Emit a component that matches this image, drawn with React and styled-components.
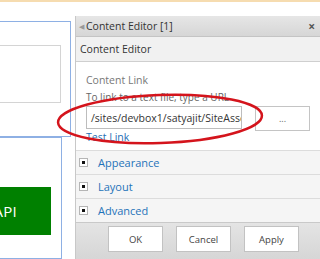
import React from 'react';
import styled, { createGlobalStyle } from 'styled-components';

const Global = createGlobalStyle`
  html, body { margin: 0; padding: 0; background: #fff; }
  body {
    width: 320px;
    height: 259px;
    overflow: hidden;
    font-family: "Open Sans", "Noto Sans", sans-serif;
  }
`;

const Page = styled.div`
  position: relative;
  width: 320px;
  height: 259px;
  display: flex;
  flex-direction: column;
  overflow: hidden;
`;

const TopStrip = styled.div`
  height: 2px;
  background: #f6dcb0;
  flex: none;
`;

const Body = styled.div`
  flex: 1;
  display: flex;
  min-height: 0;
`;

const LeftCol = styled.div`
  width: 75px;
  flex: none;
  padding-top: 19px;
  display: flex;
  flex-direction: column;
`;

const BlueBox = styled.div`
  width: ${p => p.w}px;
  height: ${p => p.h}px;
  border: 1px solid #8eb0e4;
  border-left: none;
  box-sizing: border-box;
  margin-bottom: ${p => p.gap || 0}px;
  padding-top: ${p => p.pad || 0}px;
`;

const GrayBox = styled.div`
  width: 61px;
  height: 58px;
  border: 1px solid #d4d4d4;
  border-left: none;
  box-sizing: border-box;
`;

const GreenButton = styled.div`
  width: 51px;
  height: 48px;
  background: #008000;
  color: #fff;
  font-size: 15px;
  display: flex;
  align-items: center;
  justify-content: flex-end;
  padding-right: 34px;
  box-sizing: border-box;
  letter-spacing: 0.3px;
`;

const Panel = styled.div`
  flex: 1;
  margin-top: 14px;
  border-left: 1px solid #c8c8c8;
  display: flex;
  flex-direction: column;
  background: #fff;
`;

const Header = styled.div`
  height: 21px;
  box-sizing: border-box;
  background: linear-gradient(#e6e6e6, #d6d6d6);
  border-bottom: 1px solid #c4c4c4;
  display: flex;
  align-items: center;
  padding: 0 5px 0 3px;
  font-size: 10.5px;
  color: #333;
`;

const Arrow = styled.span`
  font-size: 7px;
  color: #999;
  margin-right: 2px;
`;

const Close = styled.span`
  margin-left: auto;
  font-size: 12px;
  font-weight: bold;
  color: #555;
`;

const SubHeader = styled.div`
  height: 25px;
  box-sizing: border-box;
  background: #f1f1f1;
  border-bottom: 1px solid #cfcfcf;
  display: flex;
  align-items: center;
  padding-left: 4px;
  font-size: 10.5px;
  color: #333;
`;

const Content = styled.div`
  padding: 11px 0 0 10px;
  height: 88px;
  box-sizing: border-box;
  display: flex;
  flex-direction: column;
`;

const Label = styled.div`
  font-size: 10.5px;
  color: #777;
  line-height: 15px;
`;

const Hint = styled.div`
  font-size: 10px;
  color: #666;
  line-height: 13px;
  margin-top: 3px;
`;

const InputRow = styled.div`
  display: flex;
  gap: 13px;
  margin-top: 2px;
`;

const TextInput = styled.div`
  width: 156px;
  height: 23px;
  border: 1px solid #bdbdbd;
  box-sizing: border-box;
  font-size: 10.5px;
  color: #333;
  display: flex;
  align-items: center;
  padding-left: 4px;
  white-space: nowrap;
  overflow: hidden;
`;

const BrowseButton = styled.div`
  width: 55px;
  height: 25px;
  border: 1px solid #c4c4c4;
  box-sizing: border-box;
  font-size: 9px;
  color: #666;
  display: flex;
  align-items: center;
  justify-content: center;
`;

const LinkText = styled.div`
  font-size: 10.5px;
  color: #1f6fb5;
  line-height: 12px;
`;

const Section = styled.div`
  height: 24px;
  box-sizing: border-box;
  border-top: 1px solid #dcdcdc;
  background: #f5f5f5;
  display: flex;
  align-items: center;
  padding-left: 3px;
  font-size: 11px;
  color: #1f73b9;
`;

const Expander = styled.span`
  width: 9px;
  height: 9px;
  border: 1px solid #b5b5b5;
  background: #fff;
  box-sizing: border-box;
  margin-right: 10px;
  display: flex;
  align-items: center;
  justify-content: center;
  &::after {
    content: '';
    width: 3px;
    height: 3px;
    background: #111;
  }
`;

const Footer = styled.div`
  flex: 1;
  border-top: 1px solid #c9c9c9;
  background: linear-gradient(#e4e4e4, #d6d6d6);
  display: flex;
  align-items: flex-start;
  padding: 3px 0 0 32px;
  gap: 13px;
`;

const FooterButton = styled.div`
  width: 55px;
  height: 26px;
  box-sizing: border-box;
  border: 1px solid #c2c2c2;
  background: #fff;
  font-size: 9.5px;
  color: #444;
  display: flex;
  align-items: center;
  justify-content: center;
`;

const Annotation = styled.svg`
  position: absolute;
  left: 0;
  top: 0;
  pointer-events: none;
`;

export default function App() {
  return (
    <Page>
      <Global />
      <TopStrip />
      <Body>
        <LeftCol>
          <BlueBox w={71} h={126} pad={23}>
            <GrayBox />
          </BlueBox>
          <BlueBox w={62} h={130} pad={49}>
            <GreenButton>API</GreenButton>
          </BlueBox>
        </LeftCol>
        <Panel>
          <Header>
            <Arrow>◀</Arrow>
            Content Editor [1]
            <Close>×</Close>
          </Header>
          <SubHeader>Content Editor</SubHeader>
          <Content>
            <Label>Content Link</Label>
            <Hint>To link to a text file, type a URL</Hint>
            <InputRow>
              <TextInput>/sites/devbox1/satyajit/SiteAssets/x.html</TextInput>
              <BrowseButton>...</BrowseButton>
            </InputRow>
            <LinkText>Test Link</LinkText>
          </Content>
          <Section><Expander />Appearance</Section>
          <Section><Expander />Layout</Section>
          <Section><Expander />Advanced</Section>
          <Footer>
            <FooterButton>OK</FooterButton>
            <FooterButton>Cancel</FooterButton>
            <FooterButton>Apply</FooterButton>
          </Footer>
        </Panel>
      </Body>
      <Annotation width="320" height="259" viewBox="0 0 320 259">
        <ellipse cx="160" cy="119" rx="102" ry="24" fill="none" stroke="#d4141c" strokeWidth="2.5" transform="rotate(-2 160 119)" />
      </Annotation>
    </Page>
  );
}
